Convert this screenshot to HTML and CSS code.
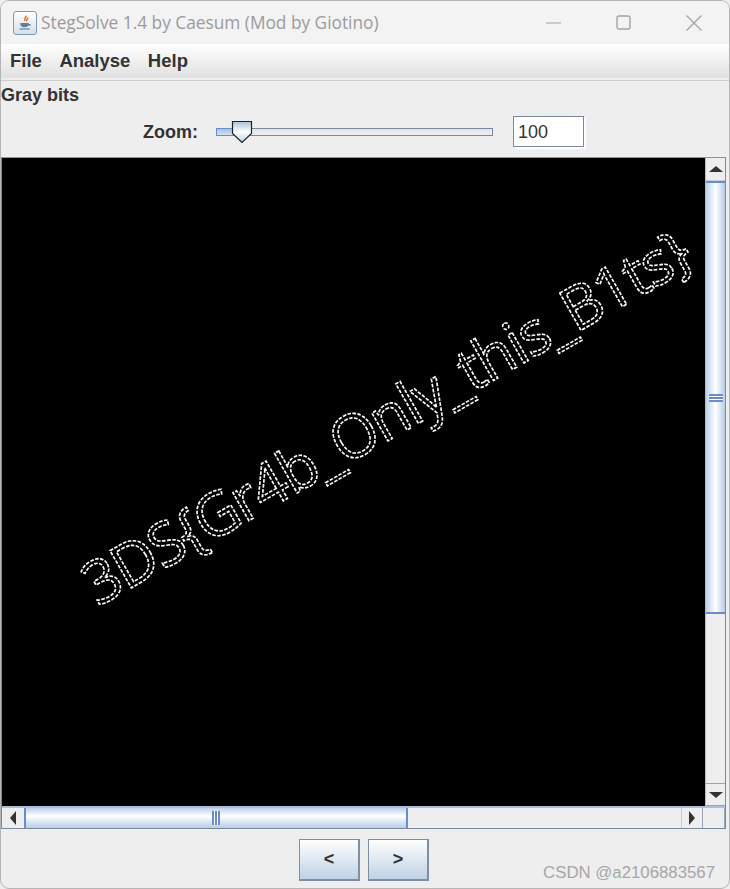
FILE: index.html
```html
<!DOCTYPE html>
<html lang="en">
<head>
    <meta charset="UTF-8">
    <title>StegSolve 1.4 by Caesum (Mod by Giotino)</title>
    <link rel="stylesheet" href="styles.css">
</head>
<body>
<div class="window">
    <div class="titlebar">
        <span class="appicon">
            <svg width="24" height="24" viewBox="0 0 24 24">
                <path d="M13 4c1 2-3 3-1 6M15 6c0 2-2 2-1 4" fill="none" stroke="#e2711d" stroke-width="1.6"/>
                <path d="M7 12h9v1.5c0 2-2 3-4.500 3S7 15.500 7 13.500zM16 13h2v2h-2" fill="#5d7f9c"/>
                <path d="M6 18.500h11" stroke="#4a6a88" stroke-width="1.2"/>
            </svg>
        </span>
        <span class="title">StegSolve 1.4 by Caesum (Mod by Giotino)</span>
        <span class="winbtn">
            <svg width="16" height="16" viewBox="0 0 16 16"><path d="M0 8h15" stroke="#a3a3a3" stroke-width="1.2"/></svg>
        </span>
        <span class="winbtn">
            <svg width="16" height="16" viewBox="0 0 16 16"><rect x="1" y="1" width="13" height="13" rx="2" fill="none" stroke="#a3a3a3" stroke-width="1.400"/></svg>
        </span>
        <span class="winbtn">
            <svg width="16" height="16" viewBox="0 0 16 16"><path d="M0.500 0.500l15 15M15.500 0.500l-15 15" stroke="#a3a3a3" stroke-width="1.300"/></svg>
        </span>
    </div>

    <div class="menubar">
        <span>File</span>
        <span>Analyse</span>
        <span>Help</span>
    </div>

    <div class="mode">Gray bits</div>

    <div class="zoomrow">
        <span class="zoomlabel">Zoom:</span>
        <div class="slider">
            <div class="track"><div class="trackfill"></div></div>
            <svg class="thumb" width="22" height="24" viewBox="0 0 22 24">
                <defs>
                    <linearGradient id="thumbfill" x1="0" y1="0" x2="0" y2="1">
                        <stop offset="0" stop-color="#a9bfd8"/>
                        <stop offset="0.5" stop-color="#ffffff"/>
                        <stop offset="1" stop-color="#b8cde3"/>
                    </linearGradient>
                </defs>
                <path d="M1.500 1.500h19v12l-9.500 9l-9.500-9z" fill="url(#thumbfill)" stroke="#222" stroke-width="1.200"/>
            </svg>
        </div>
        <div class="zoomvalue">100</div>
    </div>

    <div class="pane">
        <div class="panemain">
            <div class="viewport">
                <svg class="picture" width="703" height="648" viewBox="0 0 703 648">
                    <text class="scrawl" x="0" y="0" textLength="690" lengthAdjust="spacing" transform="translate(96 449) rotate(-29.800)">3DS{Gr4b_Only_this_B1ts}</text>
                </svg>
            </div>
            <div class="vbar">
                <div class="arrowbtn"><span class="tri up"></span></div>
                <div class="vthumb"><span class="vgrip"></span></div>
                <div class="vtrack"></div>
                <div class="arrowbtn"><span class="tri down"></span></div>
            </div>
        </div>
        <div class="hbar">
            <div class="harrow"><span class="tri left"></span></div>
            <div class="hthumb"><span class="hgrip"></span></div>
            <div class="htrack"></div>
            <div class="harrow end"><span class="tri right"></span></div>
            <div class="corner"></div>
        </div>
    </div>

    <div class="footer">
        <button class="navbtn">&lt;</button>
        <button class="navbtn">&gt;</button>
    </div>

    <div class="watermark">CSDN @a2106883567</div>
</div>
</body>
</html>
```

FILE: styles.css
```css
html, body {
    margin: 0;
    height: 100%;
    background: #eeeeee;
}
.window {
    position: relative;
    box-sizing: border-box;
    width: 730px;
    height: 889px;
    display: flex;
    flex-direction: column;
    background: #eeeeee;
    border: 1px solid #b5b5b5;
    border-radius: 9px;
    overflow: hidden;
    font-family: "Liberation Sans", Arial, sans-serif;
    color: #333333;
}
.titlebar {
    height: 43px;
    display: flex;
    align-items: center;
    background: #f3f3f3;
}
.appicon {
    width: 22px;
    height: 22px;
    margin-left: 12px;
    margin-right: 4px;
    border: 1px solid #7f97b0;
    border-radius: 3px;
    background: linear-gradient(#ffffff, #d5dfe9);
    display: flex;
    align-items: center;
    justify-content: center;
    overflow: hidden;
}
.title {
    flex: 1;
    font-family: "Open Sans", sans-serif;
    font-size: 17.300px;
    color: #9b9b9b;
}
.winbtn {
    width: 16px;
    height: 16px;
    display: flex;
    margin-right: 54px;
}
.winbtn:last-child {
    margin-right: 27px;
}
.menubar {
    height: 34px;
    display: flex;
    gap: 17.500px;
    align-items: center;
    padding-left: 9px;
    font-size: 18.500px;
    font-weight: bold;
    background: linear-gradient(#ffffff, #e0e0e0);
}
.mode {
    border-top: 1px solid #cfcfcf;
    margin-top: 2px;
    padding: 4px 0 0 0;
    height: 29px;
    box-sizing: border-box;
    font-size: 18px;
    font-weight: bold;
    line-height: 21px;
}
.zoomrow {
    height: 48px;
    box-sizing: border-box;
    padding-bottom: 2px;
    display: flex;
    align-items: center;
    padding-left: 142px;
}
.zoomlabel {
    width: 73px;
    font-size: 18px;
    font-weight: bold;
}
.slider {
    position: relative;
    width: 277px;
    height: 24px;
    margin-right: 20px;
}
.track {
    position: relative;
    margin-top: 8px;
    height: 6px;
    border: 1px solid #7a8a9c;
    background: linear-gradient(#dfe5ec, #eeeeee);
    width: 275px;
}
.trackfill {
    width: 20px;
    height: 6px;
    background: linear-gradient(#a9bfdc, #d5e0ee);
    outline: 1px solid #6a8cc9;
}
.thumb {
    position: absolute;
    left: 15px;
    top: 0;
}
.zoomvalue {
    box-sizing: border-box;
    width: 71px;
    height: 31px;
    margin-bottom: 2px;
    padding-left: 4px;
    border: 1px solid #7a8a9c;
    background: #ffffff;
    box-shadow: 2px 2px 0 #ffffff;
    font-size: 18px;
    line-height: 30px;
    color: #333333;
}
.pane {
    margin: 0 3px 0 0;
    border: 1px solid #7a8a9c;
    border-top-color: #8196ad;
    height: 672px;
    box-sizing: border-box;
    display: flex;
    flex-direction: column;
    background: #eeeeee;
}
.panemain {
    flex: 1;
    display: flex;
    min-height: 0;
}
.viewport {
    width: 703px;
    background: #000000;
}
.picture {
    display: block;
}
.scrawl {
    font-family: "Open Sans", sans-serif;
    font-size: 60px;
    font-weight: 400;
    fill: none;
    stroke: #ffffff;
    stroke-width: 1.600;
    stroke-dasharray: 3.500 1.500;
}
.vbar {
    width: 20px;
    display: flex;
    flex-direction: column;
    border-left: 1px solid #a3bcd9;
}
.arrowbtn {
    height: 23px;
    display: flex;
    align-items: center;
    justify-content: center;
    border: 1px solid #c3cbd4;
    border-width: 0 0 1px 0;
    box-sizing: border-box;
}
.arrowbtn:last-child {
    border-width: 1px 0;
    border-color: #9aa6b3;
}
.vthumb {
    height: 433px;
    box-sizing: border-box;
    border-top: 2px solid #6a8cc9;
    border-bottom: 2px solid #6a8cc9;
    background: linear-gradient(90deg, #bcd0ea, #ffffff 50%, #b8cde6);
    display: flex;
    align-items: center;
    justify-content: center;
}
.vgrip {
    width: 14px;
    height: 8px;
    background: repeating-linear-gradient(#6a8cc9 0, #6a8cc9 2px, #ffffff 2px, #ffffff 3px);
}
.vtrack {
    flex: 1;
}
.hbar {
    height: 22px;
    display: flex;
    border-top: 2px solid #a9bfdc;
    box-sizing: border-box;
}
.harrow {
    width: 22px;
    display: flex;
    align-items: center;
    justify-content: center;
    box-sizing: border-box;
}
.harrow.end {
    border-left: 1px solid #c3cbd4;
    border-right: 1px solid #9aa6b3;
}
.hthumb {
    width: 384px;
    box-sizing: border-box;
    border-left: 2px solid #6a8cc9;
    border-right: 2px solid #6a8cc9;
    background: linear-gradient(#bcd0ea, #ffffff 40%, #b8cde6);
    display: flex;
    align-items: center;
    justify-content: center;
}
.hgrip {
    width: 8px;
    height: 14px;
    background: repeating-linear-gradient(90deg, #6a8cc9 0, #6a8cc9 2px, #ffffff 2px, #ffffff 3px);
}
.htrack {
    flex: 1;
}
.corner {
    width: 22px;
    border-right: 1px solid #9aa6b3;
    box-sizing: border-box;
}
.tri {
    width: 0;
    height: 0;
    border-style: solid;
    border-color: transparent;
}
.tri.up {
    border-width: 0 7px 6px;
    border-bottom-color: #333333;
}
.tri.down {
    border-width: 6px 7px 0;
    border-top-color: #333333;
}
.tri.left {
    border-width: 7px 6px 7px 0;
    border-right-color: #333333;
}
.tri.right {
    border-width: 7px 0 7px 6px;
    border-left-color: #333333;
}
.footer {
    flex: 1;
    display: flex;
    gap: 8px;
    padding: 10px 0 0 298px;
    box-sizing: border-box;
}
.navbtn {
    width: 61px;
    height: 42px;
    padding: 0;
    border: 2px solid #7f8fa3;
    border-width: 1px 2px 2px 1px;
    background: linear-gradient(#ffffff, #eef3f8 25%, #bfd2e6);
    font-family: "Liberation Sans", Arial, sans-serif;
    font-size: 18px;
    font-weight: bold;
    color: #333333;
}
.watermark {
    position: absolute;
    right: 14px;
    bottom: 5px;
    font-family: "Liberation Sans", Arial, sans-serif;
    font-size: 16.800px;
    color: #a6a6a6;
}
```
